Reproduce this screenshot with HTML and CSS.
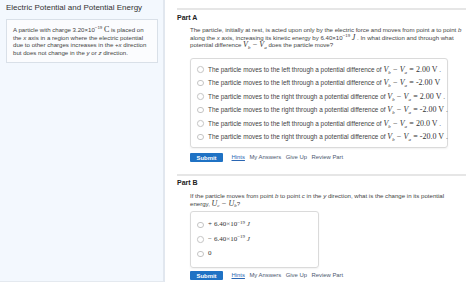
FILE: index.html
```html
<!DOCTYPE html>
<html lang="en">
<head>
  <meta charset="UTF-8">
  <meta name="viewport" content="width=device-width, initial-scale=1.0">
  <title>Electric Potential and Potential Energy</title>
  <link rel="stylesheet" href="styles.css">
</head>
<body>
  <aside class="intro">
    <h1>Electric Potential and Potential Energy</h1>
    <div class="intro-box">
      A particle with charge 3.20×10<sup>−19</sup> <span class="math">C</span> is placed on<br>
      the <i>x</i> axis in a region where the electric potential<br>
      due to other charges increases in the +<i>x</i> direction<br>
      but does not change in the <i>y</i> or <i>z</i> direction.
    </div>
  </aside>

  <main>
    <section class="part">
      <h2>Part A</h2>
      <p class="question">
        The particle, initially at rest, is acted upon only by the electric force and moves from point <i>a</i> to point <i>b</i><br>
        along the <i>x</i> axis, increasing its kinetic energy by 6.40×10<sup>−19</sup> <span class="math"><i>J</i></span> . In what direction and through what<br>
        potential difference <span class="math"><i>V</i><sub>b</sub><span class="op">−</span><i>V</i><sub>a</sub></span> does the particle move?
      </p>
      <ul class="choices">
        <li><span class="radio"></span>The particle moves to the left through a potential difference of&nbsp;<span class="math"><i>V</i><sub>b</sub><span class="op">−</span><i>V</i><sub>a</sub><span class="op">=</span>2.00 V</span>&nbsp;.</li>
        <li><span class="radio"></span>The particle moves to the left through a potential difference of&nbsp;<span class="math"><i>V</i><sub>b</sub><span class="op">−</span><i>V</i><sub>a</sub><span class="op">=</span>-2.00 V</span></li>
        <li><span class="radio"></span>The particle moves to the right through a potential difference of&nbsp;<span class="math"><i>V</i><sub>b</sub><span class="op">−</span><i>V</i><sub>a</sub><span class="op">=</span>2.00 V</span>&nbsp;.</li>
        <li><span class="radio"></span>The particle moves to the right through a potential difference of&nbsp;<span class="math"><i>V</i><sub>b</sub><span class="op">−</span><i>V</i><sub>a</sub><span class="op">=</span>-2.00 V</span>&nbsp;.</li>
        <li><span class="radio"></span>The particle moves to the left through a potential difference of&nbsp;<span class="math"><i>V</i><sub>b</sub><span class="op">−</span><i>V</i><sub>a</sub><span class="op">=</span>20.0 V</span>&nbsp;.</li>
        <li><span class="radio"></span>The particle moves to the right through a potential difference of&nbsp;<span class="math"><i>V</i><sub>b</sub><span class="op">−</span><i>V</i><sub>a</sub><span class="op">=</span>-20.0 V</span>&nbsp;.</li>
      </ul>
      <div class="actions">
        <button class="submit">Submit</button>
        <a href="#" class="hints">Hints</a>
        <a href="#">My Answers</a>
        <a href="#">Give Up</a>
        <a href="#">Review Part</a>
      </div>
    </section>

    <section class="part">
      <h2>Part B</h2>
      <p class="question">
        If the particle moves from point <i>b</i> to point <i>c</i> in the <i>y</i> direction, what is the change in its potential<br>
        energy, <span class="math"><i>U</i><sub>c</sub><span class="op">−</span><i>U</i><sub>b</sub></span>?
      </p>
      <ul class="choices short">
        <li><span class="radio"></span><span class="math small"><span class="op lead">+</span>6.40×10<sup>−19</sup> <i>J</i></span></li>
        <li><span class="radio"></span><span class="math small"><span class="op lead">−</span>6.40×10<sup>−19</sup> <i>J</i></span></li>
        <li><span class="radio"></span><span class="math small">0</span></li>
      </ul>
      <div class="actions">
        <button class="submit">Submit</button>
        <a href="#" class="hints">Hints</a>
        <a href="#">My Answers</a>
        <a href="#">Give Up</a>
        <a href="#">Review Part</a>
      </div>
    </section>
  </main>
</body>
</html>
```

FILE: styles.css
```css
*, *::before, *::after {
  margin: 0;
  padding: 0;
  box-sizing: border-box;
}

body {
  font-family: "Liberation Sans", Arial, sans-serif;
  font-size: 6.1px;
  line-height: 7.6px;
  color: #333;
  background: #fff;
  display: flex;
  height: 287px;
  overflow: hidden;
}

sup, sub {
  font-size: 4.4px;
  line-height: 0;
  position: relative;
  vertical-align: baseline;
}

sup {
  top: -2.6px;
}

sub {
  top: 1.6px;
}

/* Left intro panel */
.intro {
  width: 165px;
  height: 282px;
  flex-shrink: 0;
  background-color: #f3f8fe;
  border-right: 2px solid #e1e7ef;
  border-bottom: 1px solid #e4e9ef;
  padding: 3px 5px 0 6px;
}

.intro h1 {
  font-size: 8px;
  line-height: 10px;
  font-weight: normal;
  color: #333;
}

.intro-box {
  margin-top: 6px;
  background: #fbfcfe;
  border: 1px solid #d9e0e8;
  padding: 6px;
  color: #444;
}

/* TeX-like inline math */
.math {
  font-family: "Liberation Serif", "Times New Roman", serif;
  font-size: 8px;
  color: #333;
}

.math .op {
  margin: 0 2.2px;
}

.math .op.lead {
  margin: 0 2px 0 0;
}

.math.small {
  font-size: 7px;
}

.math sub {
  font-size: 5px;
  font-style: italic;
}

.math sup {
  font-size: 5px;
}

/* Right column */
main {
  flex: 1;
  padding: 8px 8px 0 12px;
}

.part {
  border-top: 2px solid #e6e6e6;
  padding-top: 2.5px;
}

.part + .part {
  margin-top: 11.5px;
}

.part h2 {
  font-size: 7px;
  line-height: 9px;
  font-weight: bold;
  color: #222;
}

.question {
  margin: 4.7px 0 0 13px;
  color: #444;
}

.choices {
  list-style: none;
  margin: 9.5px 0 0 13px;
  width: 258px;
  border: 1px solid #dadada;
  border-radius: 3px;
  box-shadow: 0 1px 2px rgba(0, 0, 0, 0.06);
  padding: 3.5px 6px;
}

.choices li {
  height: 13.5px;
  display: flex;
  align-items: center;
  white-space: nowrap;
  font-size: 6.4px;
  color: #444;
}

.choices.short {
  width: 129px;
  margin-top: 4px;
  padding: 5.5px 6px;
}

.choices.short li {
  height: 14.5px;
}

.radio {
  width: 6.5px;
  height: 6.5px;
  border: 1px solid #c4c4c4;
  border-radius: 50%;
  background: #fff;
  margin: 0 4.5px 0 0;
  flex-shrink: 0;
}

.actions {
  display: flex;
  align-items: center;
  gap: 4.5px;
  margin: 4.5px 0 0 13px;
  font-size: 5.9px;
}

.short + .actions {
  margin-top: 3px;
}

.submit {
  width: 33px;
  height: 9.5px;
  background-color: #1f72c4;
  border: none;
  border-radius: 1px;
  color: #fff;
  font-family: "Liberation Sans", Arial, sans-serif;
  font-weight: bold;
  font-size: 5.9px;
  margin-right: 4px;
}

.actions a {
  color: #4b5870;
  text-decoration: none;
}

.actions a.hints {
  color: #2b66b3;
  text-decoration: underline;
}
```
